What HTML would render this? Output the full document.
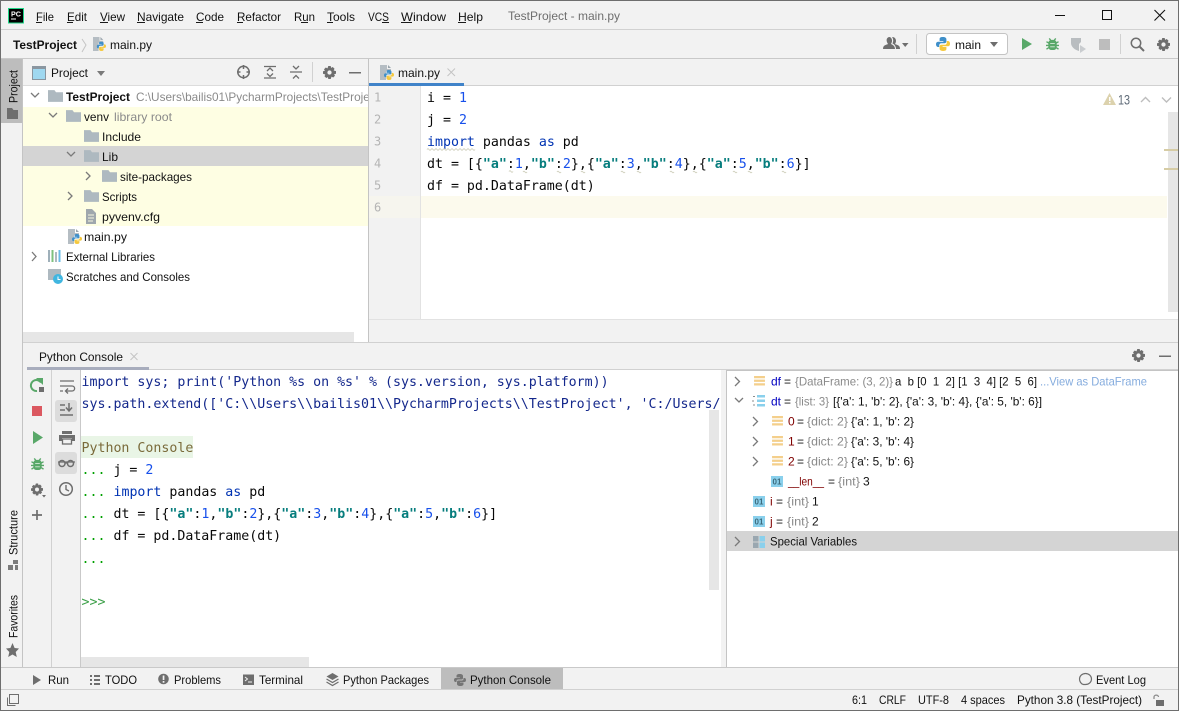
<!DOCTYPE html>
<html><head><meta charset="utf-8"><title>TestProject - main.py</title>
<style>
html,body{margin:0;padding:0;background:#f2f2f2;width:1179px;height:711px;overflow:hidden}
svg{display:block}
text{font-family:"Liberation Sans",sans-serif;font-size:12px;fill:#111;white-space:pre}
.m{font-family:"DejaVu Sans Mono","Liberation Mono",monospace;font-size:13.28px;fill:#080808}
.k{fill:#0033b3}.n{fill:#1750eb}.s{fill:#067d7d;font-weight:bold}
.c{fill:#14288c}
.g{fill:#8c8c8c}.ln{fill:#b4b4b4;font-family:"DejaVu Sans Mono",monospace;font-size:12px}
.d{fill:#00a000}.b{font-weight:bold}.v{fill:#0000c0}.r{fill:#7f0000}.q{fill:#8a8a8a}
.ic{fill:none;stroke:#6e6e6e;stroke-width:1.5}
.ch{fill:none;stroke:#7a7a7a;stroke-width:1.3}
</style></head><body>
<svg width="1179" height="711" viewBox="0 0 1179 711" xmlns="http://www.w3.org/2000/svg">
<defs>
<symbol id="py" viewBox="0 0 14 14"><path d="M7 0C4 0 3.600 1 3.600 2.200V4H7.400V4.700H2C.7 4.700 0 5.800 0 7.300S.8 10 2 10H3.200V8.300C3.200 7 4.200 6.200 5.300 6.200H8.700C9.800 6.200 10.400 5.400 10.400 4.500V2.200C10.400 1 9.200 0 7 0Z" fill="#3f8fc9"/><path d="M7 14C10 14 10.400 13 10.400 11.800V10H6.600V9.300H12C13.300 9.300 14 8.200 14 6.700S13.200 4 12 4H10.800V5.700C10.800 7 9.800 7.800 8.700 7.800H5.300C4.200 7.800 3.600 8.600 3.600 9.500V11.800C3.600 13 4.800 14 7 14Z" fill="#f5c83c"/></symbol>
<symbol id="fl" viewBox="0 0 14 11"><path d="M0 0H6L7.500 2H14V11H0Z" fill="#aeb9c0"/></symbol>
<symbol id="gear" viewBox="0 0 14 14"><path d="M5.700 0H8.300L8.700 2L10.500 1.100L12.400 3L11.500 4.800L14 5.500V8.300L12 8.700L12.900 10.500L11 12.400L9.200 11.500L8.300 14H5.700L5.300 12L3.500 12.900L1.600 11L2.500 9.200L0 8.300V5.700L2 5.300L1.100 3.500L3 1.600L4.800 2.500Z" fill="#6e6e6e"/><circle cx="7" cy="7" r="2.300" fill="#f2f2f2"/></symbol>
<symbol id="pyfile" viewBox="0 0 14 15"><path d="M0 0H7V4H11V6H6V15H0Z" fill="#b5bdc3"/><path d="M8 0L11 3H8Z" fill="#9aa5ad"/><use href="#py" x="4" y="5" width="10" height="10"/></symbol>
<symbol id="bug" viewBox="0 0 14 14"><path d="M3.500 1L5.500 3.500M10.500 1L8.500 3.500M3 6L0.500 4.500M11 6L13.500 4.500M3 8.500H0M11 8.500H14M3 11L0.500 12.500M11 11L13.500 12.500" stroke="#59a869" stroke-width="1.500" fill="none"/><rect x="2.500" y="2.500" width="9" height="11" rx="3.500" fill="#59a869"/><rect x="4.500" y="6" width="5" height="1" fill="#cfe6d3"/><rect x="4.500" y="9.500" width="5" height="1" fill="#cfe6d3"/></symbol>
<symbol id="lst" viewBox="0 0 12 11"><path d="M0 0H12V2.500H0ZM0 4H12V6.500H0ZM0 8H12V10.500H0Z" fill="#f4cf8b"/></symbol>
<clipPath id="c1"><rect x="23" y="86" width="345" height="30"/></clipPath>
<clipPath id="c2"><rect x="81" y="370" width="640" height="60"/></clipPath>
</defs>

<!-- backgrounds -->
<rect width="1179" height="711" fill="#f2f2f2"/>
<rect x="0" y="29" width="1179" height="1" fill="#d1d1d1"/>
<rect x="0" y="58" width="1179" height="1" fill="#c9c9c9"/>

<!-- title bar -->
<rect x="8" y="8" width="16" height="15.500" fill="#21d789"/><rect x="9" y="9" width="14" height="13.500" fill="#000"/>
<text x="11" y="16.500" style="font-size:7.500px;fill:#fff;font-weight:bold" textLength="10" lengthAdjust="spacingAndGlyphs">PC</text><rect x="11" y="18.500" width="5" height="1" fill="#fff"/>
<text x="36" y="21" textLength="18" lengthAdjust="spacingAndGlyphs">File</text><rect x="36" y="22" width="6" height="1" fill="#1a1a1a"/>
<text x="67" y="21" textLength="20" lengthAdjust="spacingAndGlyphs">Edit</text><rect x="67" y="22" width="6" height="1" fill="#1a1a1a"/>
<text x="100" y="21" textLength="25" lengthAdjust="spacingAndGlyphs">View</text><rect x="100" y="22" width="8" height="1" fill="#1a1a1a"/>
<text x="137" y="21" textLength="47" lengthAdjust="spacingAndGlyphs">Navigate</text><rect x="137" y="22" width="8" height="1" fill="#1a1a1a"/>
<text x="196" y="21" textLength="28" lengthAdjust="spacingAndGlyphs">Code</text><rect x="196" y="22" width="7" height="1" fill="#1a1a1a"/>
<text x="237" y="21" textLength="44" lengthAdjust="spacingAndGlyphs">Refactor</text><rect x="237" y="22" width="6" height="1" fill="#1a1a1a"/>
<text x="294" y="21" textLength="21" lengthAdjust="spacingAndGlyphs">Run</text><rect x="301" y="22" width="7" height="1" fill="#1a1a1a"/>
<text x="327" y="21" textLength="28" lengthAdjust="spacingAndGlyphs">Tools</text><rect x="327" y="22" width="6" height="1" fill="#1a1a1a"/>
<text x="368" y="21" textLength="21" lengthAdjust="spacingAndGlyphs">VCS</text><rect x="382" y="22" width="7" height="1" fill="#1a1a1a"/>
<text x="401" y="21" textLength="45" lengthAdjust="spacingAndGlyphs">Window</text><rect x="401" y="22" width="11" height="1" fill="#1a1a1a"/>
<text x="458" y="21" textLength="25" lengthAdjust="spacingAndGlyphs">Help</text><rect x="458" y="22" width="8" height="1" fill="#1a1a1a"/>
<text x="508" y="20" textLength="112" lengthAdjust="spacingAndGlyphs" style="fill:#6e6e6e">TestProject - main.py</text>
<rect x="1055" y="15" width="10" height="1" fill="#111"/>
<rect x="1102.500" y="10.500" width="9" height="9" fill="none" stroke="#111"/>
<path d="M1154.500 10L1165 20.500M1165 10L1154.500 20.500" stroke="#111" stroke-width="1.100" fill="none"/>

<!-- nav bar -->
<text x="13" y="49" class="b" textLength="64" lengthAdjust="spacingAndGlyphs">TestProject</text>
<path d="M82 39L86 45L82 52" fill="none" stroke="#c4c4c4"/>
<use href="#pyfile" x="93" y="37" width="13" height="14"/>
<text x="110" y="49" textLength="42" lengthAdjust="spacingAndGlyphs">main.py</text>
<path d="M883 49C883 45 886 45 888 44C886 41 886 38 889 37C892 37 893 41 891 44C893 45 895 46 895 49ZM892 37C896 37 897 41 895 44C897 45 900 45 900 49H896C896 46 894 44 892.500 43.500C893.500 41 893.500 39 892 37Z" fill="#6e6e6e"/>
<path d="M902 43H908.500L905.200 47Z" fill="#6e6e6e"/>
<rect x="916" y="34" width="1" height="20" fill="#d1d1d1"/>
<rect x="926.500" y="33.500" width="81" height="21" rx="3" fill="#fff" stroke="#c4c4c4"/>
<use href="#py" x="936" y="37" width="14" height="14"/>
<text x="955" y="49" textLength="26" lengthAdjust="spacingAndGlyphs">main</text>
<path d="M990 42H998L994 47Z" fill="#6e6e6e"/>
<path d="M1022 38L1032 44L1022 50Z" fill="#59a869"/>
<use href="#bug" x="1046" y="37" width="13" height="14"/>
<path d="M1071 38H1081V42L1079 44V51C1075 50 1071 47 1071 43Z" fill="#b9bdc0"/><path d="M1080 45L1086 49L1080 53Z" fill="#c9cccf"/>
<rect x="1099" y="39" width="11" height="11" fill="#bdbdbd"/>
<rect x="1120" y="34" width="1" height="20" fill="#d1d1d1"/>
<circle cx="1136" cy="43" r="4.700" class="ic" stroke-width="1.600"/>
<path d="M1139.500 46.500L1144 51" stroke="#6e6e6e" stroke-width="2"/>
<use href="#gear" x="1157" y="38" width="13" height="13"/>

<!-- left stripe -->
<rect x="22" y="59" width="1" height="609" fill="#c4c4c4"/>
<rect x="1" y="59" width="21" height="64" fill="#bdbdbd"/>
<text transform="translate(17.500 103) rotate(-90)" textLength="33" lengthAdjust="spacingAndGlyphs">Project</text>
<path d="M7 108H12L13.500 110H18V119H7Z" fill="#6e6e6e"/>
<text transform="translate(17.500 555) rotate(-90)" textLength="45" lengthAdjust="spacingAndGlyphs">Structure</text>
<path d="M8 565H13V570H8ZM15 565H18V570H15ZM13 560H18V564H13Z" fill="#6e6e6e" opacity=".9"/>
<text transform="translate(17.500 638) rotate(-90)" textLength="43" lengthAdjust="spacingAndGlyphs">Favorites</text>
<path d="M12.500 643L14.600 648L19 648.500L15.700 652L16.800 657L12.500 654.500L8.200 657L9.300 652L6 648.500L10.400 648Z" fill="#6e6e6e"/>

<!-- project header -->
<rect x="32.500" y="66.500" width="13" height="13" fill="#9fd8f0" stroke="#8a96a0"/><rect x="33" y="67" width="12" height="2" fill="#8a96a0"/>
<text x="51" y="77" textLength="37" lengthAdjust="spacingAndGlyphs">Project</text>
<path d="M97 71H105L101 76Z" fill="#7a7a7a"/>
<circle cx="243.500" cy="72" r="5.700" class="ic"/><path d="M243.500 65V69M243.500 75V79M237 72H240.500M246.500 72H250" stroke="#6e6e6e" stroke-width="1.500"/>
<path d="M264 66.500H276M264 78H276M267 71L270 68L273 71M267 73.500L270 76.500L273 73.500" fill="none" stroke="#6e6e6e" stroke-width="1.300"/>
<path d="M290 72H302M293 66L296 69L299 66M293 78.500L296 75.500L299 78.500" fill="none" stroke="#6e6e6e" stroke-width="1.300"/>
<rect x="312" y="62" width="1" height="20" fill="#d1d1d1"/>
<use href="#gear" x="323" y="66" width="13" height="13"/>
<rect x="349" y="72" width="12" height="1.500" fill="#6e6e6e"/>
<rect x="23" y="85" width="345" height="1" fill="#dcdcdc"/>

<!-- project tree -->
<rect x="23" y="86" width="345" height="257" fill="#fff"/>
<rect x="23" y="107" width="345" height="119" fill="#fefee3"/>
<rect x="23" y="146" width="345" height="20" fill="#d4d4d4"/>
<path d="M31 93L35 97L39 93" class="ch"/>
<use href="#fl" x="48" y="90" width="15" height="12"/>
<text x="66" y="101" class="b" textLength="64" lengthAdjust="spacingAndGlyphs">TestProject</text>
<g clip-path="url(#c1)"><text x="136" y="101" class="q" textLength="243" lengthAdjust="spacingAndGlyphs">C:\Users\bailis01\PycharmProjects\TestProject</text></g>
<path d="M49 113L53 117L57 113" class="ch"/>
<use href="#fl" x="66" y="110" width="15" height="12"/>
<text x="84" y="121" textLength="25" lengthAdjust="spacingAndGlyphs">venv</text>
<text x="114" y="121" class="q" textLength="58" lengthAdjust="spacingAndGlyphs">library root</text>
<use href="#fl" x="84" y="130" width="15" height="12"/>
<text x="102" y="141" textLength="39" lengthAdjust="spacingAndGlyphs">Include</text>
<path d="M67 152L71 156L75 152" class="ch"/>
<use href="#fl" x="84" y="150" width="15" height="12"/>
<text x="102" y="161" textLength="16" lengthAdjust="spacingAndGlyphs">Lib</text>
<path d="M86 172L90 176L86 180" class="ch"/>
<use href="#fl" x="102" y="170" width="15" height="12"/>
<text x="120" y="181" textLength="72" lengthAdjust="spacingAndGlyphs">site-packages</text>
<path d="M68 192L72 196L68 200" class="ch"/>
<use href="#fl" x="84" y="190" width="15" height="12"/>
<text x="102" y="201" textLength="35" lengthAdjust="spacingAndGlyphs">Scripts</text>
<path d="M86 209H92L96 213V224H86Z" fill="#9fa7ad"/><path d="M88 215H94M88 218H94M88 221H93" stroke="#f4f4e0"/>
<text x="102" y="221" textLength="58" lengthAdjust="spacingAndGlyphs">pyvenv.cfg</text>
<use href="#pyfile" x="68" y="229" width="14" height="15"/>
<text x="84" y="241" textLength="43" lengthAdjust="spacingAndGlyphs">main.py</text>
<path d="M32 252L36 256.500L32 261" class="ch"/>
<path d="M48 250H50V262H48Z" fill="#9fb0ba"/><path d="M51.500 250H53.500V262H51.500Z" fill="#7ec27e"/><path d="M55 252H57V262H55Z" fill="#aeb9c0"/><path d="M58.500 250H60.500V262H58.500Z" fill="#6bbce6"/>
<text x="66" y="261" textLength="89" lengthAdjust="spacingAndGlyphs">External Libraries</text>
<path d="M48 269H61V276H55V280H48Z" fill="#aeb9c0"/><circle cx="58" cy="279" r="5" fill="#40b6e0"/><path d="M58 276.500V279.500H60.500" stroke="#fff" fill="none"/>
<text x="66" y="281" textLength="124" lengthAdjust="spacingAndGlyphs">Scratches and Consoles</text>
<rect x="23" y="332" width="331" height="10" fill="#e6e6e6"/>
<rect x="368" y="59" width="1" height="284" fill="#c4c4c4"/>

<!-- editor tabs -->
<rect x="369" y="59" width="95" height="24" fill="#f2f2f2"/>
<use href="#pyfile" x="380" y="65" width="14" height="15"/>
<text x="398" y="77" textLength="42" lengthAdjust="spacingAndGlyphs">main.py</text>
<path d="M447.500 68.500L455 76M455 68.500L447.500 76" stroke="#c4c4c4" fill="none"/>
<rect x="369" y="83" width="95" height="3" fill="#4083c9"/>
<rect x="464" y="85" width="715" height="1" fill="#d1d1d1"/>

<!-- editor -->
<rect x="369" y="86" width="809" height="234" fill="#fff"/>
<rect x="369" y="86" width="51" height="234" fill="#f2f2f2"/>
<rect x="420" y="86" width="1" height="234" fill="#e2e2e2"/>
<rect x="369" y="196" width="51" height="22" fill="#f6f5ee"/>
<rect x="421" y="196" width="746" height="22" fill="#fcfaed"/>
<text x="374" y="101.500" class="ln">1</text>
<text x="374" y="123.500" class="ln">2</text>
<text x="374" y="145.500" class="ln">3</text>
<text x="374" y="167.500" class="ln">4</text>
<text x="374" y="189.500" class="ln">5</text>
<text x="374" y="211.500" class="ln">6</text>
<text x="427" y="102" class="m">i = <tspan class="n">1</tspan></text>
<text x="427" y="124" class="m">j = <tspan class="n">2</tspan></text>
<text x="427" y="146" class="m"><tspan class="k">import</tspan> pandas <tspan class="k">as</tspan> pd</text>
<text x="427" y="168" class="m">dt = [{<tspan class="s">"a"</tspan>:<tspan class="n">1</tspan>,<tspan class="s">"b"</tspan>:<tspan class="n">2</tspan>},{<tspan class="s">"a"</tspan>:<tspan class="n">3</tspan>,<tspan class="s">"b"</tspan>:<tspan class="n">4</tspan>},{<tspan class="s">"a"</tspan>:<tspan class="n">5</tspan>,<tspan class="s">"b"</tspan>:<tspan class="n">6</tspan>}]</text>
<text x="427" y="190" class="m">df = pd.DataFrame(dt)</text>
<path d="M427 149.500q1-1.500 2 0t2 0 2 0 2 0 2 0 2 0 2 0 2 0 2 0 2 0 2 0 2 0 2 0 2 0 2 0 2 0 2 0 2 0 2 0 2 0 2 0 2 0 2 0 2 0" fill="none" stroke="#d2d2c0"/>
<path d="M509 171.500q1-1.500 2 0t2 0M523 172q1-1.500 2 0t2 0M557 172q1-1.500 2 0t2 0M581 172q1-1.500 2 0t2 0M621 172q1-1.500 2 0t2 0M637 172q1-1.500 2 0t2 0M670 172q1-1.500 2 0t2 0M693 172q1-1.500 2 0t2 0M733 172q1-1.500 2 0t2 0M748 172q1-1.500 2 0t2 0M782 172q1-1.500 2 0t2 0" fill="none" stroke="#d2d2c0"/>
<path d="M1109.500 93L1116 105H1103Z" fill="#dcd2ad"/><rect x="1109" y="97" width="1.500" height="4" fill="#fff"/><rect x="1109" y="102" width="1.500" height="1.500" fill="#fff"/>
<text x="1118" y="104.500" style="fill:#5f6b78;font-size:14px" textLength="12" lengthAdjust="spacingAndGlyphs">13</text>
<path d="M1141 102L1145.500 97.500L1150 102M1162 97.500L1166.500 102L1171 97.500" fill="none" stroke="#bdbdbd" stroke-width="1.400"/>
<rect x="1168" y="112" width="10" height="200" fill="#e6e6e6"/>
<rect x="1164" y="149" width="14" height="2" fill="#d6cca5"/>
<rect x="1164" y="168" width="14" height="2" fill="#d6cca5"/>
<rect x="369" y="319" width="809" height="1" fill="#e2e2e2"/>
<rect x="369" y="320" width="809" height="22" fill="#f2f2f2"/>
<rect x="23" y="342" width="1155" height="1" fill="#d1d1d1"/>

<!-- console header -->
<rect x="23" y="343" width="1155" height="26" fill="#f2f2f2"/>
<text x="39" y="361" textLength="84" lengthAdjust="spacingAndGlyphs">Python Console</text>
<path d="M130.500 353L137.500 360M137.500 353L130.500 360" stroke="#c4c4c4" fill="none"/>
<rect x="27" y="367" width="122" height="3" fill="#a8adbd"/>
<rect x="149" y="369" width="1029" height="1" fill="#d1d1d1"/>
<use href="#gear" x="1132" y="349" width="13" height="13"/>
<rect x="1159" y="355.500" width="12" height="1.500" fill="#6e6e6e"/>

<!-- console toolbars -->
<rect x="23" y="370" width="58" height="298" fill="#f2f2f2"/>
<rect x="51" y="370" width="1" height="298" fill="#d1d1d1"/>
<rect x="80" y="370" width="1" height="298" fill="#c9c9c9"/>
<path d="M41 382.500A5.500 5.500 0 1 0 37 391" fill="none" stroke="#59a869" stroke-width="2"/><path d="M36 378H43V385Z" fill="#59a869"/><rect x="39" y="387" width="5" height="5" fill="#6e6e6e"/>
<rect x="32" y="406" width="10" height="10" fill="#db5860"/>
<path d="M33 431L43 437.500L33 444Z" fill="#59a869"/>
<use href="#bug" x="31" y="457" width="13" height="14"/>
<use href="#gear" x="31" y="483" width="12" height="13"/><path d="M42 495H46L44 497.500Z" fill="#6e6e6e"/>
<path d="M37 510V520M32 515H42" stroke="#6e6e6e" stroke-width="1.700"/>
<rect x="55" y="400" width="22" height="22" rx="3" fill="#dcdcdc"/>
<rect x="55" y="452" width="22" height="22" rx="3" fill="#dcdcdc"/>
<path d="M60 381H74M60 386H72C75.500 386 75.500 391 72 391H66M68 388.500L65.500 391L68 393.500M60 391H63" fill="none" stroke="#6e6e6e" stroke-width="1.300"/>
<path d="M60 405H65M60 410H65M60 415H73M69 403V410M66 407.500L69 411L72 407.500" fill="none" stroke="#6e6e6e" stroke-width="1.500"/>
<path d="M62 431H72V434H62ZM59 435H75V441H72V438H62V441H59Z" fill="#6e6e6e"/><rect x="62.500" y="439" width="9" height="5" fill="none" stroke="#6e6e6e" stroke-width="1.300"/>
<circle cx="62" cy="463.500" r="3" class="ic"/><circle cx="70.500" cy="463.500" r="3" class="ic"/><path d="M58 462H75M65 463H68" stroke="#6e6e6e" stroke-width="1.200"/>
<circle cx="66" cy="489" r="6.300" class="ic"/><path d="M66 485V489.500L69 491" fill="none" stroke="#6e6e6e" stroke-width="1.400"/>

<!-- console -->
<rect x="81" y="370" width="640" height="298" fill="#fff"/>
<rect x="709" y="410" width="10" height="180" fill="#e6e6e6"/>
<g clip-path="url(#c2)">
<text x="81.500" y="386" class="m c">import sys; print('Python %s on %s' % (sys.version, sys.platform))</text>
<text x="81.500" y="408" class="m c">sys.path.extend(['C:\\Users\\bailis01\\PycharmProjects\\TestProject', 'C:/Users/</text>
</g>
<rect x="81" y="436" width="112" height="22" fill="#e9f5e6"/>
<text x="81.500" y="452" class="m" style="fill:#7a6a3a">Python Console</text>
<text x="81.500" y="474" class="m"><tspan class="d">...</tspan> j = <tspan class="n">2</tspan></text>
<text x="81.500" y="496" class="m"><tspan class="d">...</tspan> <tspan class="k">import</tspan> pandas <tspan class="k">as</tspan> pd</text>
<text x="81.500" y="518" class="m"><tspan class="d">...</tspan> dt = [{<tspan class="s">"a"</tspan>:<tspan class="n">1</tspan>,<tspan class="s">"b"</tspan>:<tspan class="n">2</tspan>},{<tspan class="s">"a"</tspan>:<tspan class="n">3</tspan>,<tspan class="s">"b"</tspan>:<tspan class="n">4</tspan>},{<tspan class="s">"a"</tspan>:<tspan class="n">5</tspan>,<tspan class="s">"b"</tspan>:<tspan class="n">6</tspan>}]</text>
<text x="81.500" y="540" class="m"><tspan class="d">...</tspan> df = pd.DataFrame(dt)</text>
<text x="81.500" y="563" class="m d">...</text>
<text x="81.500" y="606" class="m" style="fill:#3ea04a">&gt;&gt;&gt;</text>
<rect x="81" y="657" width="228" height="10" fill="#e6e6e6"/>
<rect x="721" y="370" width="5" height="298" fill="#f2f2f2"/>

<!-- variables -->
<rect x="726.500" y="370.500" width="452" height="297" fill="#fff" stroke="#c4c4c4"/>
<path d="M735 377L739.500 381.500L735 386" class="ch"/>
<use href="#lst" x="754" y="376" width="11" height="10"/>
<text x="771" y="385.500" class="v" textLength="10" lengthAdjust="spacingAndGlyphs">df</text><text x="784" y="385.500">=</text>
<text x="795" y="385.500" class="q" textLength="98" lengthAdjust="spacingAndGlyphs">{DataFrame: (3, 2)}</text>
<text x="895" y="385.500" textLength="142" lengthAdjust="spacingAndGlyphs">a  b [0  1  2] [1  3  4] [2  5  6]</text>
<text x="1040" y="385.500" style="fill:#85acde" textLength="107" lengthAdjust="spacingAndGlyphs">...View as DataFrame</text>
<path d="M735 398L739 402L743 398" class="ch"/>
<path d="M753 396.500H755M753 400V402M753 405H755" stroke="#8c8c8c"/><rect x="757" y="395" width="8" height="2.500" fill="#8ad0ec"/><rect x="757" y="399.500" width="8" height="2.500" fill="#8ad0ec"/><rect x="757" y="404" width="8" height="2.500" fill="#8ad0ec"/>
<text x="771" y="405.500" class="v" textLength="10" lengthAdjust="spacingAndGlyphs">dt</text><text x="784" y="405.500">=</text>
<text x="795" y="405.500" class="q" textLength="34" lengthAdjust="spacingAndGlyphs">{list: 3}</text>
<text x="833" y="405.500" textLength="209" lengthAdjust="spacingAndGlyphs">[{'a': 1, 'b': 2}, {'a': 3, 'b': 4}, {'a': 5, 'b': 6}]</text>

<path d="M753 417L757.500 421.500L753 426" class="ch"/><use href="#lst" x="772" y="416" width="11" height="10"/>
<text x="788" y="425.500" class="r">0</text><text x="797" y="425.500">=</text><text x="807" y="425.500" class="q" textLength="41" lengthAdjust="spacingAndGlyphs">{dict: 2}</text><text x="851" y="425.500" textLength="63" lengthAdjust="spacingAndGlyphs">{'a': 1, 'b': 2}</text>
<path d="M753 437L757.500 441.500L753 446" class="ch"/><use href="#lst" x="772" y="436" width="11" height="10"/>
<text x="788" y="445.500" class="r">1</text><text x="797" y="445.500">=</text><text x="807" y="445.500" class="q" textLength="41" lengthAdjust="spacingAndGlyphs">{dict: 2}</text><text x="851" y="445.500" textLength="63" lengthAdjust="spacingAndGlyphs">{'a': 3, 'b': 4}</text>
<path d="M753 457L757.500 461.500L753 466" class="ch"/><use href="#lst" x="772" y="456" width="11" height="10"/>
<text x="788" y="465.500" class="r">2</text><text x="797" y="465.500">=</text><text x="807" y="465.500" class="q" textLength="41" lengthAdjust="spacingAndGlyphs">{dict: 2}</text><text x="851" y="465.500" textLength="63" lengthAdjust="spacingAndGlyphs">{'a': 5, 'b': 6}</text>

<rect x="771" y="476" width="12" height="11" fill="#8ad0ec"/><text x="772.500" y="484.500" style="font-size:8px;font-weight:bold;fill:#3c6a7c">01</text>
<text x="788" y="485.500" class="r" textLength="36" lengthAdjust="spacingAndGlyphs">__len__</text><text x="828" y="485.500">=</text><text x="838" y="485.500" class="q" textLength="22" lengthAdjust="spacingAndGlyphs">{int}</text><text x="863" y="485.500">3</text>
<rect x="753" y="496" width="12" height="11" fill="#8ad0ec"/><text x="754.500" y="504.500" style="font-size:8px;font-weight:bold;fill:#3c6a7c">01</text>
<text x="770" y="505.500" class="r">i</text><text x="776" y="505.500">=</text><text x="787" y="505.500" class="q" textLength="22" lengthAdjust="spacingAndGlyphs">{int}</text><text x="812" y="505.500">1</text>
<rect x="753" y="516" width="12" height="11" fill="#8ad0ec"/><text x="754.500" y="524.500" style="font-size:8px;font-weight:bold;fill:#3c6a7c">01</text>
<text x="770" y="525.500" class="r">j</text><text x="776" y="525.500">=</text><text x="787" y="525.500" class="q" textLength="22" lengthAdjust="spacingAndGlyphs">{int}</text><text x="812" y="525.500">2</text>
<rect x="727" y="531" width="451" height="20" fill="#d4d4d4"/>
<path d="M735 537L739.500 541.500L735 546" class="ch"/>
<rect x="753" y="536" width="5.500" height="5.500" fill="#9aa7b0"/><rect x="759.500" y="536" width="5.500" height="5.500" fill="#8ad0ec"/><rect x="753" y="542.500" width="5.500" height="5.500" fill="#9aa7b0"/><rect x="759.500" y="542.500" width="5.500" height="5.500" fill="#8ad0ec"/>
<text x="770" y="545.500" textLength="87" lengthAdjust="spacingAndGlyphs">Special Variables</text>

<!-- tool window bar -->
<rect x="1" y="667" width="1177" height="1" fill="#c9c9c9"/>
<rect x="1" y="668" width="1177" height="21" fill="#f2f2f2"/>
<rect x="441" y="668" width="122" height="21" fill="#bdbdbd"/>
<path d="M33 675L41 680L33 685Z" fill="#6e6e6e"/>
<text x="48" y="684" textLength="21" lengthAdjust="spacingAndGlyphs">Run</text>
<path d="M90 675H92V677H90ZM94 675H100V677H94ZM90 679H92V681H90ZM94 679H100V681H94ZM90 683H92V685H90ZM94 683H100V685H94Z" fill="#6e6e6e"/>
<text x="105" y="684" textLength="32" lengthAdjust="spacingAndGlyphs">TODO</text>
<circle cx="163.500" cy="679" r="5.300" fill="#6e6e6e"/><rect x="162.700" y="675.500" width="1.700" height="4.500" fill="#f2f2f2"/><rect x="162.700" y="681" width="1.700" height="1.700" fill="#f2f2f2"/>
<text x="174" y="684" textLength="47" lengthAdjust="spacingAndGlyphs">Problems</text>
<rect x="243" y="674.500" width="11" height="10.500" fill="#6e6e6e"/><path d="M245 677L247.500 679L245 681M248 682H252" stroke="#f2f2f2" fill="none"/>
<text x="259" y="684" textLength="44" lengthAdjust="spacingAndGlyphs">Terminal</text>
<path d="M332.500 673L338.500 676.500L332.500 680L326.500 676.500Z" fill="#6e6e6e"/><path d="M326.500 679L332.500 682.500L338.500 679M326.500 682L332.500 685.500L338.500 682" fill="none" stroke="#6e6e6e" stroke-width="1.200"/>
<text x="343" y="684" textLength="86" lengthAdjust="spacingAndGlyphs">Python Packages</text>
<g opacity=".9"><path d="M460 674C457 674 456.500 675 456.500 676V677.500H460V678H455.500C454.500 678 454 679 454 680S454.500 682 455.500 682H456.500V681C456.500 680 457.500 679.500 458 679.500H461.500C462.500 679.500 463 679 463 678V676C463 675 462 674 460 674Z" fill="#6e6e6e"/><path d="M460 686C463 686 463.500 685 463.500 684V682.500H460V682H464.500C465.500 682 466 681 466 680S465.500 678 464.500 678H463.500V679C463.500 680 462.500 680.500 462 680.500H458.500C457.500 680.500 457 681 457 682V684C457 685 458 686 460 686Z" fill="#6e6e6e"/></g>
<text x="470" y="684" textLength="81" lengthAdjust="spacingAndGlyphs">Python Console</text>
<path d="M1085.500 673.500A6 5.500 0 1 1 1085.500 684.500H1083.500C1081 684 1079.500 681.500 1079.500 679A6 5.500 0 0 1 1085.500 673.500Z" fill="none" stroke="#6e6e6e" stroke-width="1.200"/>
<text x="1096" y="684" textLength="50" lengthAdjust="spacingAndGlyphs">Event Log</text>

<!-- status bar -->
<rect x="1" y="689" width="1177" height="1" fill="#d1d1d1"/>
<rect x="1" y="690" width="1177" height="20" fill="#f2f2f2"/>
<path d="M7.500 697.500V705.500H15.500" fill="none" stroke="#6e6e6e"/><rect x="9.500" y="694.500" width="9" height="9" fill="none" stroke="#6e6e6e"/>
<text x="852" y="704" textLength="15" lengthAdjust="spacingAndGlyphs">6:1</text>
<text x="879" y="704" textLength="27" lengthAdjust="spacingAndGlyphs">CRLF</text>
<text x="918" y="704" textLength="31" lengthAdjust="spacingAndGlyphs">UTF-8</text>
<text x="961" y="704" textLength="44" lengthAdjust="spacingAndGlyphs">4 spaces</text>
<text x="1017" y="704" textLength="125" lengthAdjust="spacingAndGlyphs">Python 3.8 (TestProject)</text>
<path d="M1154 699V697C1154 694.500 1158.500 694.500 1158.500 697" fill="none" stroke="#8c8c8c" stroke-width="1.300"/><rect x="1156" y="700" width="8" height="6" fill="#6e6e6e"/>

<!-- window frame -->
<rect x="0" y="0" width="1179" height="1" fill="#6e6e6e"/>
<rect x="0" y="710" width="1179" height="1" fill="#6e6e6e"/>
<rect x="0" y="0" width="1" height="711" fill="#6e6e6e"/>
<rect x="1178" y="0" width="1" height="711" fill="#6e6e6e"/>
</svg>
</body></html>
